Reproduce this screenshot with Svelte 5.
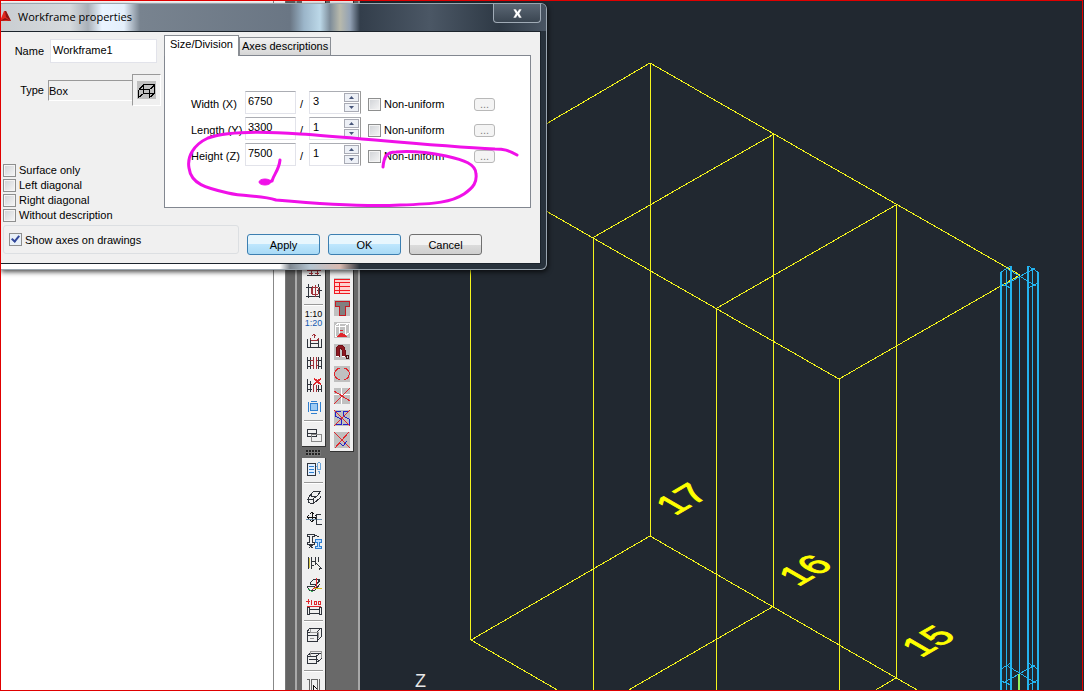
<script>
  let name = $state("Workframe1");
  let tab = $state(0);
  let showAxes = $state(true);

  const tabs = ["Size/Division", "Axes descriptions"];
  const options = ["Surface only", "Left diagonal", "Right diagonal", "Without description"];

  let axes = $state([
    { label: "Width (X)", size: "6750", count: 3, nonUniform: false },
    { label: "Length (Y)", size: "3300", count: 1, nonUniform: false },
    { label: "Height (Z)", size: "7500", count: 1, nonUniform: false },
  ]);

  // toolbar icons on a 16x16 grid: [stroke, path, fill]
  const ink = "#30343c";
  const red = "#e0262c";
  const maroon = "#a03038";
  const blue = "#2f7fd0";

  const icons = {
    bolts: [[maroon, "M1 9h14M3 12h4M9 12h4M5 5v9M11 5v9"], [ink, "M0 6h6M10 6h6M1 14h14"]],
    weldHole: [[ink, "M0 4h10M0 13h14M2 1v14M13 4v11M11 7h5M12 1v3"], [maroon, "M5 8a4 4 0 1 0 8 0a4 4 0 1 0-8 0M9 2v12M6 3v9"]],
    beamTurn: [[ink, "M1 6v9M4 7v7M12 7v7M15 6v9M1 14.500h14M4 10.500h8"], [maroon, "M4 5c0 4 8 4 9 0M8 5V1M6 3l2-2 2 2"]],
    beamSplit: [[ink, "M1 2v12M4 2v12M12 2v12M15 2v12M1 5h3M1 11h3M12 5h3M12 11h3"], [maroon, "M7 2v12M10 2v12M4 5h3M4 10h3M10 5h2M10 10h2"]],
    beamDelete: [[ink, "M1 2v13M4 4v11M12 8v7M15 8v7M1 7h5M1 12h5M10 12h5"], [red, "M8 1l7 6M15 1l-7 6M8 2l7 6M15 2l-7 6"], [maroon, "M7 7v8M10 8v7"]],
    view: [[blue, "M4.500 4.500h7v7h-7z", "#9ccbf5"], [blue, "M2 3v10M14 3v10M5 2h6M5 14h6"]],
    layers: [[ink, "M1.500 2.500h9v7h-9zM1 6h10"], ["#888", "M5 7.500h10v7H5z"]],
    props: [[ink, "M1.500 2.500h8v12h-8z", "#e2f0ff"], [blue, "M3 5h5M3 8h5M3 11h5"], ["#6ca5da", "M11 5.500c0-5 4-5 4 0l-1 3h-2zM12 10h2M13 10v3"]],
    plate: [[ink, "M5 5l3-3h7l-4 5H5zM5 5l-3 5h5l4-3M2 10v3l2 1h4l6-5V7M7 10v4"]],
    moveAxis: [["#111", "M1 6h10M6 1v10M4 3l2-2 2 2M4 9l2 2 2-2M3 4L1 6l2 2M9 4l2 2-2 2"], ["#6d8ea8", "M0 8h16"], [ink, "M15 3h-5v10h6"]],
    profile: [[ink, "M1 1h7v2H6v6h2v2H1V9h2V3H1z"], [blue, "M9 6h6v3h-2v4h2v2H9v-2h2V9H9z", "#bbdcff"], [ink, "M3 12l4 3M7 12l-4 3M9 2l4 2"]],
    pick: [["#d5c64a", "M3.500 3v10"], [ink, "M2 2v12M5 2v12M5 6h4M5 10h3M9 2v8M12 2v5M10 8l5 5-2 0 1 2"]],
    ucs: [[ink, "M4 6l4-4h6l-3 5H4zM1 9h8l5-5M1 9l2 4h6l5-6"], [red, "M10 1v9L6 13"], ["#39b55a", "M2 12l5 3"], ["#d8b820", "M8 11h8"]],
    elevation: [[red, "M0 2h4M2 0v5M5 6V1M8 2h2v3H8zM12 2h2v3h-2zM1 7h14"], [ink, "M1 8v7h2V8zM13 8v7h2V8zM3 10h10M3 14h10"]],
    box1: [[ink, "M1 5h10v9H1zM1 5l3-4h11v9l-4 4M11 5l4-4M1 8h10"], ["#999", "M4 2v3h8v6M4 11h4"]],
    box2: [[ink, "M1 7h9v7H1zM1 7l4-3h10v6l-5 4M10 7l5-3M3 10h9"], ["#999", "M4 2h11v7M4 2v5"]],
    section: [["#666", "M1 2h2v12H1M5 2h6v12H5zM13 2v12h2"], ["#111", "M7 8v5M7 8l4 4"]],
  };

  const upper = ["bolts", "weldHole", "-", "scale", "beamTurn", "beamSplit", "beamDelete", "view", "-", "layers"];
  const lower = ["props", "-", "plate", "moveAxis", "profile", "pick", "ucs", "elevation", "-", "box1", "box2", "-", "section"];

  const snaps = [
    { name: "Table", shapes: [["#f01820", "M0 1h16v14H0zM0 4h16M0 8h16M0 12h16M5 4v11", "#ffd2cf"]] },
    { name: "Section T", shapes: [["#c41c24", "M1 1h14v5h-4v9H5V6H1z", "#808080"]] },
    { name: "Wire box", shapes: [["#fff", "M1 4h10v10H1zM1 4l4-3h10v10l-4 3M11 4l4-3M5 1v10"], [red, "M4 14l4-3 4 3zM6 8h3", red]] },
    { name: "Magnet", shapes: [["#701018", "M2 12V6c0-6 9-6 9 0v6H8V6c0-2-3-2-3 0v6z", "#8c1820"], ["#fff", "M2 12h3M8 12h3"], ["#401010", "M12 13a1.500 1.500 0 1 0 3 0a1.500 1.500 0 1 0-3 0"]] },
    { name: "Arc", shapes: [[red, "M6 2C-1 4-1 12 6 14M10 2c7 2 7 10 0 12"]] },
    { name: "Break", shapes: [["#fff", "M0 6h16M7 0v16"], [red, "M0 3l16 10M16 0L0 16"]] },
    { name: "Curve", shapes: [["#2222c8", "M7 1H1v5l6 3v5H1M15 1H9v5l6 3v5H9"], [red, "M0 0l16 16M16 0L0 16"]] },
    { name: "Corner", shapes: [[red, "M0 0l16 16M15 0L1 16"], ["#2222c8", "M6 11l3 3 4-5"]] },
  ];

  const wires = [
    "M471 168L650 63L1020 275L839 379Z",
    "M774 134L594 237M896 205L717 308",
    "M559 691L471 640L650 536L919 691",
    "M774 606L627 691M896 678L874 691",
  ];
  const posts = "M470.500 168V640M593.500 237V691M650.500 63V536M716.500 308V691M773.500 134V606M839.500 379V691M896.500 205V678";

  const marks = [
    { text: "17", x: 675, y: 516 },
    { text: "16", x: 798, y: 587 },
    { text: "15", x: 921, y: 658 },
  ];

  function step(axis, by) {
    axis.count = Math.max(1, axis.count + by);
  }
</script>

{#snippet icon(shapes)}
  <svg width="16" height="16" viewBox="0 0 16 16" aria-hidden="true">
    {#each shapes as [stroke, d, fill]}
      <path {d} {stroke} fill={fill ?? "none"} />
    {/each}
  </svg>
{/snippet}

{#snippet tools(list)}
  {#each list as item}
    {#if item === "-"}
      <span class="sep"></span>
    {:else if item === "scale"}
      <button class="tool scale" aria-label="Scale"><span>1:10</span><span class="to">1:20</span></button>
    {:else}
      <button class="tool" aria-label={item}>{@render icon(icons[item])}</button>
    {/if}
  {/each}
{/snippet}

<div class="screen">
  <div class="sheet"></div>
  <div class="gutter"></div>
  <div class="docks">
    <div class="dock">
      <div class="bar first">{@render tools(upper)}</div>
      <div class="grip"></div>
      <div class="bar">{@render tools(lower)}</div>
    </div>
    <div class="dock">
      <div class="bar snaps">
        {#each snaps as snap}
          <button class="tool" aria-label={snap.name}>{@render icon(snap.shapes)}</button>
        {/each}
      </div>
    </div>
  </div>

  <main class="model">
    <svg viewBox="360 0 724 691" preserveAspectRatio="xMinYMin slice">
      <g class="wire">
        {#each wires as d}
          <path {d} />
        {/each}
        <path d={posts} />
      </g>
      {#each marks as mark}
        <!-- lettering lies in the isometric ground plane -->
        <text class="mark" transform="matrix(0.866 -0.5 0.866 0.5 {mark.x} {mark.y})">{mark.text}</text>
      {/each}
      <text class="ucs" x="415" y="687">Z</text>
      <g class="column">
        <path class="thick" d="M1001 272V691M1011 266V691M1028 266V691M1038 272V691" />
        <path d="M1006.500 270V691M1019.500 277V691M1032.500 270V691" />
        {#each [0, 397] as dy}
          <path
            transform="translate(0 {dy})"
            d="M1001 272l10-6M1001 284l10 4M1003 286l32-18M1006 268l30 18M1028 266l10 6M1028 288l10-5" />
        {/each}
      </g>
      <path class="axis" d="M1019 674V691" />
    </svg>
  </main>

  <section class="dialog" aria-label="Workframe properties">
    <header>
      <svg class="logo" width="12" height="16" viewBox="0 0 12 16" aria-hidden="true">
        <path d="M0 12L4 2h2l5 10z" fill="#e0281f" />
        <path d="M5 2l1 6 5 4L6 2zM0 12l5-3 6 3-5-1z" fill="#8c1412" />
      </svg>
      <h1>Workframe properties</h1>
      <button class="close" aria-label="Close">
        <svg width="11" height="9" viewBox="0 0 11 9" aria-hidden="true">
          <path d="M1 0h3l1.500 2.500L7 0h3L7.500 4.500 10 9H7L5.500 6.500 4 9H1l2.500-4.500z" fill="#fff" stroke="#3a4450" stroke-width="0.500" />
        </svg>
      </button>
    </header>

    <div class="body">
      <div class="upper">
        <div class="side">
          <div class="field">
            <label for="name">Name</label>
            <input id="name" class="name" bind:value={name} />
          </div>
          <div class="field type">
            <label for="type">Type</label>
            <input id="type" class="kind" value="Box" readonly />
            <button class="shape" aria-label="Choose type">
              <svg width="19" height="18" viewBox="0 0 19 18" aria-hidden="true">
                <path d="M0 0h19v18H0z" fill="#c0c0c0" />
                <path d="M1.500 8.500h11M1.500 8.500v8M12.500 8.500v8M6.500 3.500h11v9M1.500 8.500l5-5M12.500 8.500l5-5M6.500 3.500v9h11M1.500 16.500l5-4M12.500 16.500l5-4M2.500 8.500l5-5M13.500 8.500l4-4" fill="none" stroke="#000" />
              </svg>
            </button>
          </div>
          <div class="options">
            {#each options as option}
              <label class="check"><input type="checkbox" />{option}</label>
            {/each}
          </div>
        </div>

        <div class="tabbed">
          <div class="tabs" role="tablist">
            {#each tabs as title, i}
              <button role="tab" class:active={tab === i} aria-selected={tab === i} onclick={() => (tab = i)}>{title}</button>
            {/each}
          </div>
          <div class="panel" role="tabpanel">
            {#each axes as axis, i}
              <div class="row">
                <label for="size{i}">{axis.label}</label>
                <input id="size{i}" class="num" bind:value={axis.size} />
                <span class="slash">/</span>
                <div class="spin">
                  <input aria-label="{axis.label} divisions" bind:value={axis.count} />
                  <div class="arrows">
                    <button aria-label="Increase" onclick={() => step(axis, 1)}>
                      <svg width="5" height="3" viewBox="0 0 5 3"><path d="M0 3l2.500-3L5 3z" fill="#46557a" /></svg>
                    </button>
                    <button aria-label="Decrease" onclick={() => step(axis, -1)}>
                      <svg width="5" height="3" viewBox="0 0 5 3"><path d="M0 0h5L2.500 3z" fill="#46557a" /></svg>
                    </button>
                  </div>
                </div>
                <label class="check"><input type="checkbox" bind:checked={axis.nonUniform} />Non-uniform</label>
                <button class="more" disabled>...</button>
              </div>
            {/each}
          </div>
        </div>
      </div>

      <div class="lower">
        <div class="group">
          <label class="check"><input type="checkbox" bind:checked={showAxes} />Show axes on drawings</label>
        </div>
        <div class="actions">
          <button class="blue">Apply</button>
          <button class="blue">OK</button>
          <button>Cancel</button>
        </div>
      </div>
    </div>

    <svg class="pen" width="547" height="267" viewBox="0 3 547 267" aria-hidden="true">
      <path d="M517 155C508 150 504 149 495 149C430 146 350 137 300 134C260 131 225 132 208 138C193 145 187 157 189 168C191 184 206 188 228 193C245 197 262 195 276 200C310 203 365 207 400 205C436 204 452 202 464 194C474 187 477 182 476 174C476 164 464 160 446 156C426 152 408 151 396 152C386 152 384 157 383 167" />
      <path d="M280 160C279 170 274 174 272 181L265 182" />
      <ellipse cx="265" cy="182" rx="6" ry="3" />
    </svg>
  </section>
</div>

<style>
  :global(body) {
    background: #212830;
  }
  .screen {
    position: relative;
    display: flex;
    height: 100vh;
    overflow: hidden;
    font: 11px/14px "Liberation Sans", Arial, sans-serif;
    color: #000;
  }
  .screen::after {
    content: "";
    position: absolute;
    inset: 0 1px 0 0;
    border: 1px solid #e00000;
    pointer-events: none;
  }
  button,
  input {
    box-sizing: border-box;
    margin: 0;
    padding: 0;
    font: inherit;
    color: inherit;
    border-radius: 0;
  }
  svg {
    display: block;
  }

  /* application background */
  .sheet {
    flex: 0 0 273px;
    background: #fff;
    border-right: 1px solid #888;
  }
  .gutter {
    flex: 0 0 11px;
    background: #fff;
    border-right: 1px solid #777;
  }
  .docks {
    display: flex;
    gap: 4px;
    flex: none;
    padding: 0 4px 0 7px;
    background: #696969;
    border-left: 9px solid #646464;
    border-right: 2px solid #a8a8a8;
    box-shadow: inset 2px 0 #aaa;
  }
  .dock {
    width: 24px;
  }
  .bar {
    box-sizing: border-box;
    display: flex;
    flex-direction: column;
    background: #f0f0f0;
    border-right: 1px solid #333;
  }
  .bar.first {
    padding-top: 258px;
    border-bottom: 1px solid #333;
  }
  .bar.snaps {
    padding-top: 275px;
    border-bottom: 1px solid #333;
  }
  .grip {
    box-sizing: border-box;
    height: 11px;
    padding: 3px 5px 2px 4px;
    background: radial-gradient(circle at 1px 1px, #222 1px, transparent 1px) content-box 0 0 / 3px 3px #777;
    background-origin: content-box;
    background-clip: content-box;
  }
  .tool {
    display: flex;
    align-items: center;
    justify-content: center;
    flex: none;
    height: 22px;
    border: 0;
    background: none;
  }
  .tool svg,
  .shape svg {
    shape-rendering: crispEdges;
  }
  .snaps .tool svg {
    background: #c0c0c0;
  }
  .scale {
    flex-direction: column;
    font-size: 9px;
    line-height: 9px;
  }
  .to {
    color: #1558b0;
  }
  .sep {
    flex: none;
    height: 2px;
    margin: 2px;
    border-top: 1px solid #999;
    border-bottom: 1px solid #fff;
    box-sizing: border-box;
  }

  /* drawing area */
  .model {
    flex: 1;
    min-width: 0;
    background: #212830;
  }
  .model svg {
    width: 100%;
    height: 100%;
  }
  .wire {
    fill: none;
    stroke: #f4f41c;
    shape-rendering: crispEdges;
  }
  .mark {
    font: 38px "Liberation Sans Narrow", "Liberation Sans", sans-serif;
    fill: #ffff00;
    stroke: #ffff00;
  }
  .ucs {
    font: 18px "Liberation Sans", sans-serif;
    fill: #e8e8e8;
  }
  .column {
    fill: none;
    stroke: #24b4f0;
    shape-rendering: crispEdges;
  }
  .thick {
    stroke-width: 2;
  }
  .axis {
    stroke: #8ef060;
    stroke-width: 2;
  }

  /* dialog window */
  .dialog {
    position: absolute;
    top: 3px;
    left: 0;
    box-sizing: border-box;
    width: 547px;
    padding: 0 5px 5px 0;
    border: 1px solid #9aa6b0;
    border-left: 0;
    border-radius: 0 6px 6px 0;
    background: linear-gradient(90deg, #fff 280px, #7e8790 290px, #b4c4d0 310px, #d9b9b0 340px, #28323c 360px);
    box-shadow: 1px 2px 5px rgba(0, 0, 0, 0.7);
  }
  header {
    display: flex;
    align-items: flex-start;
    height: 27px;
    margin-right: -5px;
    border-radius: 0 5px 0 0;
    background: linear-gradient(
      90deg,
      #c9cdd1 0,
      #d6dadd 70px,
      #a9b0b8 88px,
      #e9f4ff 102px,
      #e4effb 124px,
      #78838f 140px,
      #6a7684 290px,
      #9bb5c9 304px,
      #bcd8e8 320px,
      #7d8c99 330px,
      #b8b9ac 340px,
      #93a2b5 350px,
      #333e4b 360px,
      #4b5765 430px,
      #2e3945 500px,
      #4a5664 547px
    );
  }
  .logo {
    margin: 5px 6px 0 0;
  }
  h1 {
    flex: 1;
    margin: 0;
    font: 11px/26px "Open Sans", "Noto Sans", sans-serif;
  }
  .close {
    display: flex;
    align-items: center;
    justify-content: center;
    width: 48px;
    height: 19px;
    margin-right: 5px;
    border: 1px solid #a0abb6;
    border-top: 0;
    border-radius: 0 0 4px 4px;
    background: linear-gradient(#5b6774, #3a4551);
  }
  .body {
    padding: 3px 9px 8px 3px;
    background: #f0f0f0;
    border: solid #1c242c;
    border-width: 1px 1px 1px 0;
  }
  .upper,
  .lower,
  .field,
  .tabs {
    display: flex;
  }
  .side {
    flex: 0 0 161px;
    padding-top: 4px;
  }
  .field {
    align-items: center;
    gap: 6px;
    height: 24px;
  }
  .field label {
    width: 41px;
    text-align: right;
  }
  .field input {
    padding: 0 2px 2px;
    border: 1px solid #e2e3ea;
    background: #fff;
  }
  .field .name {
    width: 107px;
    height: 24px;
  }
  .type {
    height: 32px;
    margin: 11px 0 57px;
    gap: 0;
  }
  .field .kind {
    width: 84px;
    height: 21px;
    margin-left: 4px;
    padding: 2px 0 0;
    border: solid #999;
    border-width: 1px 0 0 1px;
    border-bottom: 1px solid #fff;
    background: #f0f0f0;
  }
  .shape {
    display: flex;
    align-items: center;
    justify-content: center;
    width: 29px;
    height: 32px;
    border: 1px solid #999;
    border-right-color: #fff;
    border-bottom-color: #fff;
    background: #f0f0f0;
  }
  .options {
    display: grid;
    gap: 1px;
  }
  .check {
    display: flex;
    align-items: center;
    gap: 3px;
  }
  .check input {
    appearance: none;
    flex: none;
    width: 13px;
    height: 13px;
    border: 1px solid #8e8f8f;
    background: linear-gradient(135deg, #cfd2d6, #f6f6f6);
    box-shadow: inset 0 0 0 1px #f4f4f4;
  }
  .check input:checked {
    background: #e8f0f8;
    box-shadow: none;
  }
  .check input:checked::before {
    content: "";
    display: block;
    width: 3px;
    height: 6px;
    margin: 0 auto;
    border: solid #31479a;
    border-width: 0 2px 2px 0;
    rotate: 40deg;
  }
  .tabbed {
    flex: 1;
  }
  .tabs {
    align-items: flex-end;
    height: 20px;
  }
  .tabs button {
    height: 18px;
    padding: 0 2px 2px;
    border: 1px solid #8a8e94;
    border-bottom: 0;
    background: linear-gradient(#f2f2f2, #d6d6d6);
    white-space: nowrap;
  }
  .tabs .active {
    height: 21px;
    margin-bottom: -1px;
    padding: 0 5px 4px;
    background: #fff;
    z-index: 1;
  }
  .panel {
    padding: 35px 0 38px 26px;
    border: 1px solid #828790;
    background: #fff;
  }
  .row {
    display: grid;
    grid-template-columns: 54px 51px 13px 52px 113px 21px;
    align-items: center;
    height: 26px;
  }
  .row .check {
    padding-left: 7px;
  }
  .num,
  .spin {
    box-sizing: border-box;
    height: 23px;
    border: 1px solid #e2e3ea;
    border-top-color: #abadb3;
    background: #fff;
  }
  .num {
    width: 51px;
    padding: 0 2px 4px;
    margin-bottom: 3px;
  }
  .slash {
    padding-left: 4px;
  }
  .spin {
    display: flex;
    margin-bottom: 3px;
    border-right-color: #999;
  }
  .spin input {
    flex: 1;
    min-width: 0;
    padding: 0 3px 4px;
    border: 0;
    background: none;
  }
  .arrows {
    display: grid;
    gap: 1px;
    width: 15px;
    padding: 1px;
  }
  .arrows button {
    display: flex;
    align-items: center;
    justify-content: center;
    border: 1px solid #a9abb5;
    background: #edf0f6;
  }
  .more {
    height: 13px;
    border: 1px solid #b8b8b8;
    border-radius: 3px;
    background: #f4f4f4;
    color: #838383;
    line-height: 10px;
  }
  .lower {
    gap: 8px;
    margin-top: 3px;
  }
  .group {
    display: flex;
    align-items: center;
    box-sizing: border-box;
    width: 236px;
    height: 29px;
    padding-left: 5px;
    border: 1px solid #dcdfe2;
    border-radius: 3px;
  }
  .actions {
    display: flex;
    align-items: flex-end;
    gap: 8px;
    height: 30px;
  }
  .actions button {
    width: 73px;
    height: 21px;
    border: 1px solid #707070;
    border-radius: 3px;
    background: linear-gradient(#f3f3f3 50%, #dcdcdc 50%, #cfcfcf);
  }
  .actions .blue {
    border-color: #3c7fb1;
    background: linear-gradient(#e8f6fd 45%, #bee6fd 50%, #a9daf5);
  }

  /* freehand markup over the window */
  .pen {
    position: absolute;
    top: -1px;
    left: 0;
    fill: none;
    stroke: #f010e8;
    stroke-width: 3;
    stroke-linecap: round;
    pointer-events: none;
  }
  .pen ellipse {
    fill: #f010e8;
    stroke-width: 1;
  }
</style>
